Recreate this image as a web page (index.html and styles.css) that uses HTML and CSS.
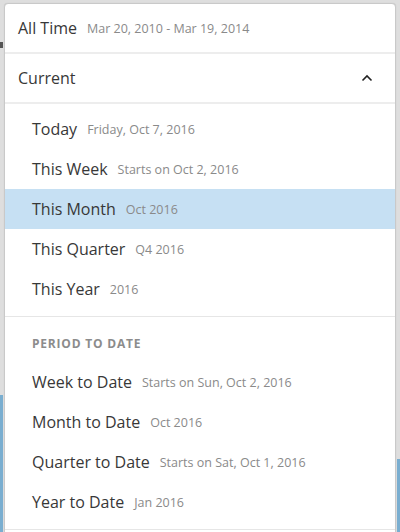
FILE: index.html
```html
<!DOCTYPE html>
<html>
<head>
<meta charset="utf-8">
<link rel="stylesheet" href="styles.css">
</head>
<body>
<div class="dropdown">
  <div class="row row-top">
    <span class="label">All Time</span>
    <span class="sub">Mar 20, 2010 - Mar 19, 2014</span>
  </div>
  <div class="row row-head">
    <span class="label">Current</span>
    <svg class="chev" width="12" height="8" viewBox="0 0 12 8"><path d="M1.5 6.5 L6 2 L10.5 6.5" fill="none" stroke="#222" stroke-width="1.6"/></svg>
  </div>
  <div class="group">
    <div class="item"><span class="label">Today</span><span class="sub">Friday, Oct 7, 2016</span></div>
    <div class="item"><span class="label">This Week</span><span class="sub">Starts on Oct 2, 2016</span></div>
    <div class="item active"><span class="label">This Month</span><span class="sub">Oct 2016</span></div>
    <div class="item"><span class="label">This Quarter</span><span class="sub">Q4 2016</span></div>
    <div class="item"><span class="label">This Year</span><span class="sub">2016</span></div>
  </div>
  <div class="group group-last">
    <div class="group-title">PERIOD TO DATE</div>
    <div class="item"><span class="label">Week to Date</span><span class="sub">Starts on Sun, Oct 2, 2016</span></div>
    <div class="item"><span class="label">Month to Date</span><span class="sub">Oct 2016</span></div>
    <div class="item"><span class="label">Quarter to Date</span><span class="sub">Starts on Sat, Oct 1, 2016</span></div>
    <div class="item"><span class="label">Year to Date</span><span class="sub">Jan 2016</span></div>
  </div>
</div>
</body>
</html>
```
FILE: styles.css
```css
html, body {
  margin: 0;
  height: 100%;
}
body {
  font-family: "Open Sans", "Noto Sans", sans-serif;
  background-color: #dedede;
  background-image:
    linear-gradient(#7aaed0, #7aaed0),
    linear-gradient(#7aaed0, #7aaed0),
    linear-gradient(#555, #555);
  background-repeat: no-repeat;
  background-size: 3px 140px, 3px 80px, 3px 6px;
  background-position: 0 395px, 397px 459px, 0 42px;
  overflow: hidden;
}
.dropdown {
  margin: 3px 4px 0;
  height: 540px;
  background: #fff;
  border: 1px solid #c9c9c9;
  border-radius: 4px 4px 0 0;
  box-shadow: 0 0 1px rgba(0,0,0,0.15);
}
.row {
  display: flex;
  align-items: center;
  padding-left: 13px;
  border-bottom: 2px solid #ededed;
}
.row-top {
  height: 48px;
  gap: 10px;
}
.row-head {
  height: 48px;
  justify-content: space-between;
  padding-right: 22px;
}
.label {
  font-size: 16px;
  color: #383838;
}
.sub {
  font-size: 12.5px;
  color: #8a8a8a;
}
.chev {
  display: block;
}
.group {
  padding: 5px 0 7px;
  border-bottom: 1px solid #e6e6e6;
}
.group-last {
  padding-top: 0;
}
.group-title {
  height: 38px;
  padding-top: 7px;
  display: flex;
  align-items: center;
  padding-left: 27px;
  font-size: 12px;
  font-weight: 700;
  letter-spacing: 0.8px;
  color: #8c8c8c;
}
.item {
  height: 40px;
  display: flex;
  align-items: center;
  gap: 10px;
  padding-left: 27px;
}
.item.active {
  background: #c6e0f3;
}
```
